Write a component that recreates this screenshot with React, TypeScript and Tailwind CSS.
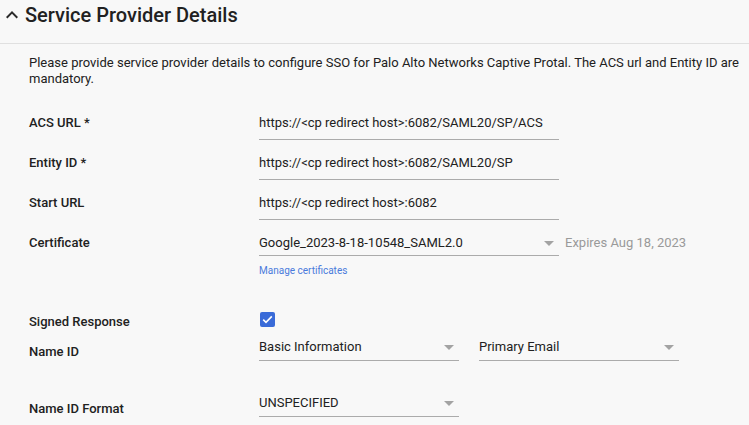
import React from "react";

const Arrow = () => (
  <svg width="10" height="5" viewBox="0 0 10 5" className="shrink-0 mr-[5px]">
    <path d="M0 0L5 5L10 0Z" fill="#a3a3a3" />
  </svg>
);

const Input = ({ value }: { value: string }) => (
  <div className="w-[300px] border-b border-[#ababab] pb-[8px] text-[13px] leading-[16px] text-[#212121]">
    {value}
  </div>
);

export default function App() {
  return (
    <div
      className="w-[749px] h-[425px] overflow-hidden bg-[#f8f8f8] text-[#212121]"
      style={{ fontFamily: "Roboto, 'Liberation Sans', sans-serif" }}
    >
      <div className="h-[44px] border-b border-[#e0e0e0] flex items-start pt-[3px]">
        <svg width="24" height="24" viewBox="0 0 24 24" className="shrink-0">
          <path d="M12 8l-6 6 1.41 1.41L12 10.83l4.59 4.58L18 14z" fill="#2a2a2a" />
        </svg>
        <div className="ml-[1px] text-[20px] leading-[24px] font-medium text-[#212121]">
          Service Provider Details
        </div>
      </div>

      <div className="pl-[29px] pr-[6px]">
        <p className="mt-[11px] text-[13px] leading-[16px]">
          Please provide service provider details to configure SSO for Palo Alto Networks Captive Protal. The ACS url and Entity ID are mandatory.
        </p>

        <div className="mt-[28px] flex flex-col">
          <div className="h-[40px] flex items-start">
            <div className="w-[230px] text-[13px] leading-[16px] font-medium">ACS URL *</div>
            <Input value="https://<cp redirect host>:6082/SAML20/SP/ACS" />
          </div>
          <div className="h-[40px] flex items-start">
            <div className="w-[230px] text-[13px] leading-[16px] font-medium">Entity ID *</div>
            <Input value="https://<cp redirect host>:6082/SAML20/SP" />
          </div>
          <div className="h-[40px] flex items-start">
            <div className="w-[230px] text-[13px] leading-[16px] font-medium">Start URL</div>
            <Input value="https://<cp redirect host>:6082" />
          </div>
          <div className="flex items-start">
            <div className="w-[230px] text-[13px] leading-[16px] font-medium">Certificate</div>
            <div className="w-[300px] flex items-center justify-between border-b border-[#ababab] pb-[4px] text-[13px] leading-[16px]">
              <span>Google_2023-8-18-10548_SAML2.0</span>
              <Arrow />
            </div>
            <div className="ml-[6px] text-[13px] leading-[16px] text-[#9a9a9a]">Expires Aug 18, 2023</div>
          </div>
          <div className="mt-[7px] h-[18px] flex">
            <div className="w-[230px]" />
            <a className="text-[10px] leading-[16px] text-[#4a7bdc]">Manage certificates</a>
          </div>

          <div className="mt-[31px] flex items-start">
            <div className="w-[230px] mt-[2px] text-[13px] leading-[16px] font-medium">Signed Response</div>
            <div className="ml-[1px] w-[15px] h-[15px] rounded-[2px] bg-[#3a6bd8] flex items-center justify-center">
              <svg width="11" height="9" viewBox="0 0 11 9">
                <path d="M1.2 4.6L4 7.3L9.8 1.4" stroke="#fff" strokeWidth="1.6" fill="none" />
              </svg>
            </div>
          </div>

          <div className="mt-[9px] flex items-start">
            <div className="w-[230px] mt-[5px] text-[13px] leading-[16px] font-medium">Name ID</div>
            <div className="flex gap-[20px]">
              <div className="w-[200px] flex items-center justify-between border-b border-[#ababab] pb-[5px] text-[13px] leading-[16px]">
                <span>Basic Information</span>
                <Arrow />
              </div>
              <div className="w-[200px] flex items-center justify-between border-b border-[#ababab] pb-[5px] text-[13px] leading-[16px]">
                <span>Primary Email</span>
                <Arrow />
              </div>
            </div>
          </div>

          <div className="mt-[34px] flex items-start">
            <div className="w-[230px] mt-[6px] text-[13px] leading-[16px] font-medium">Name ID Format</div>
            <div className="w-[200px] flex items-center justify-between border-b border-[#ababab] pb-[5px] text-[13px] leading-[16px]">
              <span>UNSPECIFIED</span>
              <Arrow />
            </div>
          </div>
        </div>
      </div>
    </div>
  );
}
